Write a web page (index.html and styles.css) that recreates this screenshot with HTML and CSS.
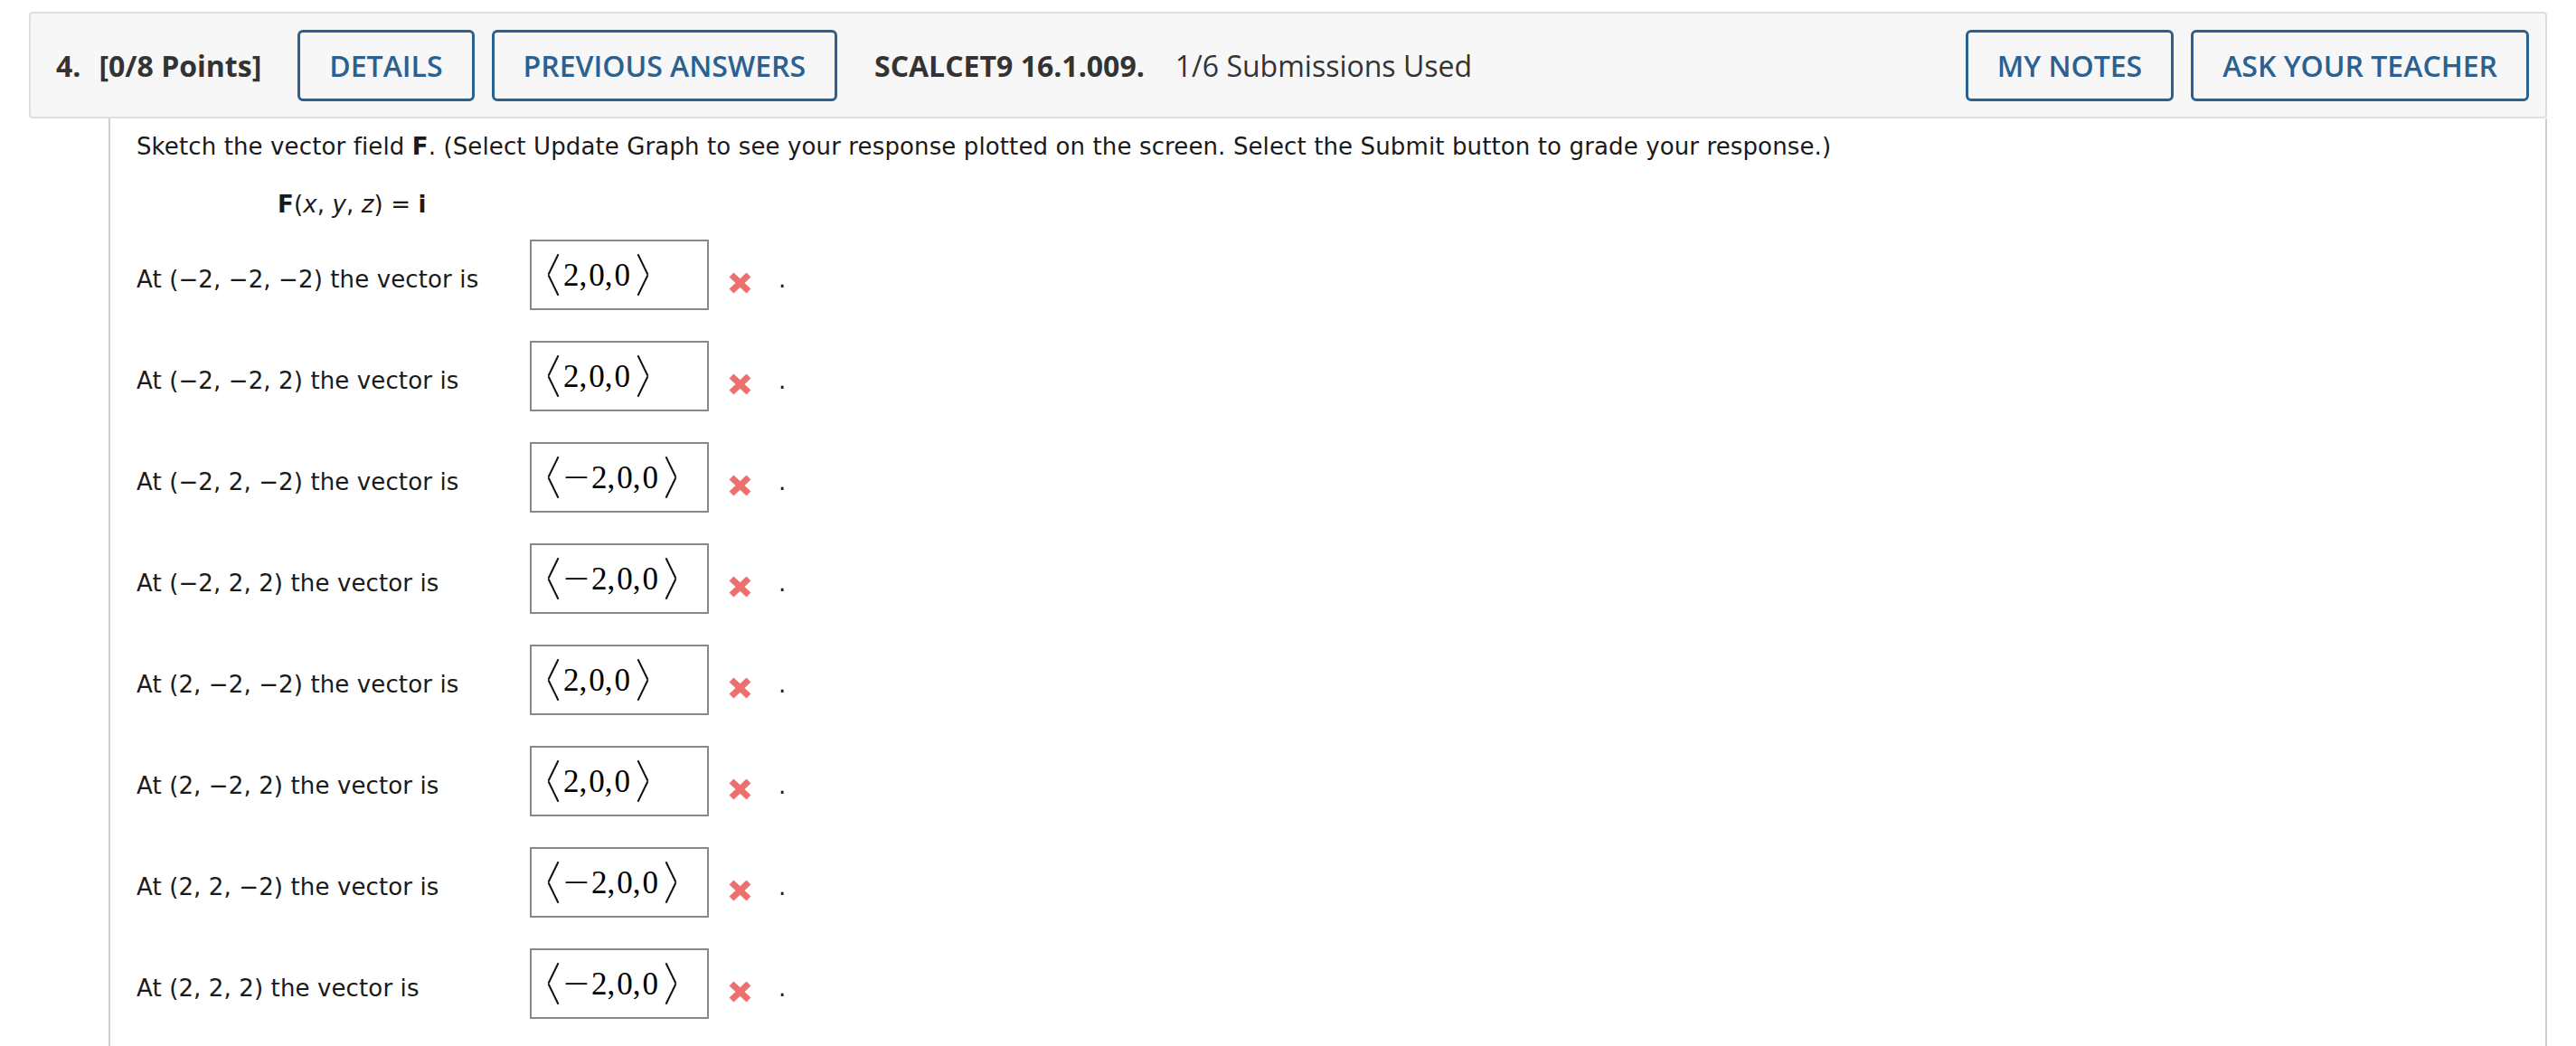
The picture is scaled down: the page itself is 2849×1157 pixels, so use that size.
FILE: index.html
```html
<!DOCTYPE html>
<html lang="en">
<head>
    <meta charset="UTF-8">
    <meta name="viewport" content="width=device-width, initial-scale=1.0">
    <title>Question 4 - SCALCET9 16.1.009</title>
    <link rel="stylesheet" href="styles.css">
</head>
<body>
    <div class="question-header">
        <span class="q-num">4.</span>
        <span class="q-points">[0/8 Points]</span>
        <button class="hdr-btn btn-details">DETAILS</button>
        <button class="hdr-btn">PREVIOUS ANSWERS</button>
        <span class="q-ref">SCALCET9 16.1.009.</span>
        <span class="q-subs">1/6 Submissions Used</span>
        <div class="hdr-right">
            <button class="hdr-btn">MY NOTES</button>
            <button class="hdr-btn">ASK YOUR TEACHER</button>
        </div>
    </div>

    <div class="question-body">
        <p class="intro">Sketch the vector field <b>F</b>. (Select Update Graph to see your response plotted on the screen. Select the Submit button to grade your response.)</p>
        <p class="formula"><b>F</b>(<i>x</i>, <i>y</i>, <i>z</i>) = <b>i</b></p>

        <div class="answers">
            <div class="answer-row">
                <span class="row-label">At (&minus;2, &minus;2, &minus;2) the vector is</span>
                <span class="answer-box"><span class="math"><span class="delim"></span><span class="num">2<span class="punct">,</span>0<span class="punct">,</span>0</span><span class="delim close"></span></span></span>
                <svg class="mark" viewBox="0 0 27 26" width="27" height="26"><path d="M4 4 L23 22 M23 4 L4 22"/></svg>
                <span class="dot">.</span>
            </div>
            <div class="answer-row">
                <span class="row-label">At (&minus;2, &minus;2, 2) the vector is</span>
                <span class="answer-box"><span class="math"><span class="delim"></span><span class="num">2<span class="punct">,</span>0<span class="punct">,</span>0</span><span class="delim close"></span></span></span>
                <svg class="mark" viewBox="0 0 27 26" width="27" height="26"><path d="M4 4 L23 22 M23 4 L4 22"/></svg>
                <span class="dot">.</span>
            </div>
            <div class="answer-row">
                <span class="row-label">At (&minus;2, 2, &minus;2) the vector is</span>
                <span class="answer-box"><span class="math"><span class="delim"></span><span class="num"><span class="minus">&minus;</span>2<span class="punct">,</span>0<span class="punct">,</span>0</span><span class="delim close"></span></span></span>
                <svg class="mark" viewBox="0 0 27 26" width="27" height="26"><path d="M4 4 L23 22 M23 4 L4 22"/></svg>
                <span class="dot">.</span>
            </div>
            <div class="answer-row">
                <span class="row-label">At (&minus;2, 2, 2) the vector is</span>
                <span class="answer-box"><span class="math"><span class="delim"></span><span class="num"><span class="minus">&minus;</span>2<span class="punct">,</span>0<span class="punct">,</span>0</span><span class="delim close"></span></span></span>
                <svg class="mark" viewBox="0 0 27 26" width="27" height="26"><path d="M4 4 L23 22 M23 4 L4 22"/></svg>
                <span class="dot">.</span>
            </div>
            <div class="answer-row">
                <span class="row-label">At (2, &minus;2, &minus;2) the vector is</span>
                <span class="answer-box"><span class="math"><span class="delim"></span><span class="num">2<span class="punct">,</span>0<span class="punct">,</span>0</span><span class="delim close"></span></span></span>
                <svg class="mark" viewBox="0 0 27 26" width="27" height="26"><path d="M4 4 L23 22 M23 4 L4 22"/></svg>
                <span class="dot">.</span>
            </div>
            <div class="answer-row">
                <span class="row-label">At (2, &minus;2, 2) the vector is</span>
                <span class="answer-box"><span class="math"><span class="delim"></span><span class="num">2<span class="punct">,</span>0<span class="punct">,</span>0</span><span class="delim close"></span></span></span>
                <svg class="mark" viewBox="0 0 27 26" width="27" height="26"><path d="M4 4 L23 22 M23 4 L4 22"/></svg>
                <span class="dot">.</span>
            </div>
            <div class="answer-row">
                <span class="row-label">At (2, 2, &minus;2) the vector is</span>
                <span class="answer-box"><span class="math"><span class="delim"></span><span class="num"><span class="minus">&minus;</span>2<span class="punct">,</span>0<span class="punct">,</span>0</span><span class="delim close"></span></span></span>
                <svg class="mark" viewBox="0 0 27 26" width="27" height="26"><path d="M4 4 L23 22 M23 4 L4 22"/></svg>
                <span class="dot">.</span>
            </div>
            <div class="answer-row">
                <span class="row-label">At (2, 2, 2) the vector is</span>
                <span class="answer-box"><span class="math"><span class="delim"></span><span class="num"><span class="minus">&minus;</span>2<span class="punct">,</span>0<span class="punct">,</span>0</span><span class="delim close"></span></span></span>
                <svg class="mark" viewBox="0 0 27 26" width="27" height="26"><path d="M4 4 L23 22 M23 4 L4 22"/></svg>
                <span class="dot">.</span>
            </div>
        </div>
    </div>
</body>
</html>
```

FILE: styles.css
```css
* {
    margin: 0;
    padding: 0;
    box-sizing: border-box;
}

body {
    background-color: #fff;
    padding: 13px 32px 0;
    font-family: 'DejaVu Sans', Verdana, sans-serif;
    color: #1a1a1a;
}

/* question header bar */
.question-header {
    display: flex;
    align-items: center;
    height: 118px;
    padding: 0 18px 0 28px;
    background-color: #f7f7f7;
    border: 2px solid #dedede;
    border-radius: 4px;
    font-family: 'Open Sans', sans-serif;
    font-size: 32px;
    color: #333;
}

.q-num {
    font-weight: bold;
    margin-right: 20px;
}

.q-points {
    font-weight: bold;
    margin-right: 40px;
}

.hdr-btn {
    height: 79px;
    padding: 0 32px;
    background: none;
    border: 3px solid #2a6191;
    border-radius: 6px;
    font-family: 'Open Sans', sans-serif;
    font-size: 32px;
    font-weight: 600;
    color: #2a6191;
    cursor: pointer;
    margin-right: 19px;
}

.q-ref {
    font-weight: bold;
    margin-left: 22px;
    margin-right: 34px;
}

.hdr-right {
    display: flex;
    margin-left: auto;
}

.hdr-right .hdr-btn:last-child {
    margin-right: 0;
}

/* question body */
.question-body {
    margin-left: 88px;
    border-left: 2px solid #cfcfcf;
    border-right: 2px solid #cfcfcf;
    padding: 15px 0 40px 29px;
    font-size: 26px;
    line-height: 32px;
    letter-spacing: 0.12px;
}

.formula {
    margin-top: 32px;
    padding-left: 156px;
}

.answers {
    display: flex;
    flex-direction: column;
    gap: 34px;
    margin-top: 23px;
}

.answer-row {
    display: flex;
    align-items: center;
    height: 78px;
}

.row-label {
    width: 435px;
    padding-top: 10px;
}

.answer-box {
    display: flex;
    align-items: center;
    width: 198px;
    height: 78px;
    border: 2px solid #888;
    padding-left: 18px;
}

/* typeset vector, like the math renderer output */
.math {
    display: inline-flex;
    align-items: center;
    font-family: 'Liberation Serif', 'Times New Roman', serif;
    font-size: 35px;
    line-height: 35px;
    letter-spacing: 0;
    color: #000;
}

.delim {
    position: relative;
    display: inline-block;
    width: 11px;
    height: 45px;
    margin-right: 6px;
}

.delim::before,
.delim::after {
    content: "";
    position: absolute;
    left: 4.6px;
    width: 1.8px;
    height: 25px;
    background-color: #111;
}

.delim::before {
    top: -1.25px;
    transform: rotate(26deg);
}

.delim::after {
    top: 21.25px;
    transform: rotate(-26deg);
}

.delim.close {
    margin-right: 0;
    margin-left: 8px;
}

.delim.close::before {
    transform: rotate(-26deg);
}

.delim.close::after {
    transform: rotate(26deg);
}

.punct {
    margin-right: 2px;
}

.minus {
    display: inline-block;
    width: 31px;
    transform: scaleX(1.45);
    transform-origin: left center;
}

.mark {
    margin-left: 21px;
    margin-top: 18px;
}

.mark path {
    fill: none;
    stroke: #e8625f;
    stroke-width: 7;
    opacity: 0.9;
}

.dot {
    margin-left: 29px;
    padding-top: 10px;
}
```
